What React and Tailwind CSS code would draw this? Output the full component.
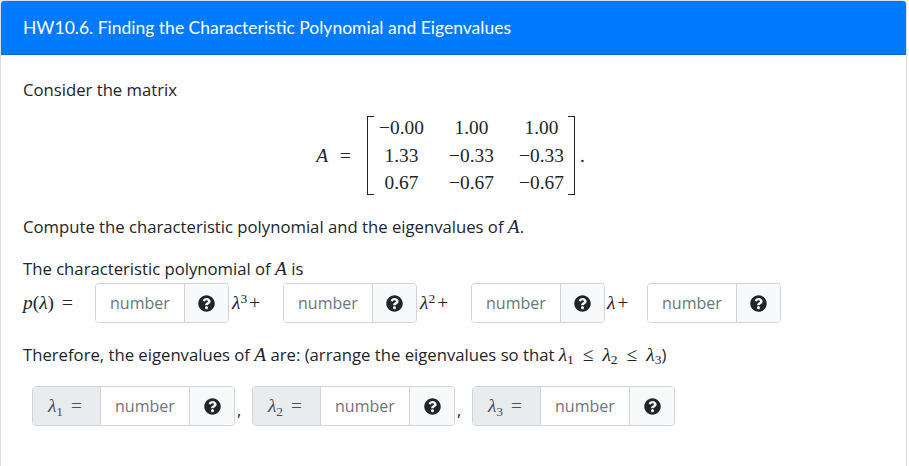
import React from "react";
import { FaQuestionCircle } from "react-icons/fa";

const sans = { fontFamily: '"Open Sans", "Liberation Sans", sans-serif' };

function M({ children, className = "" }) {
  return (
    <span className={`font-['Liberation_Serif',serif] text-[19.36px] leading-none ${className}`}>
      {children}
    </span>
  );
}
function I({ children }) {
  return <span className="italic">{children}</span>;
}
function Eq({ className = "" }) {
  return <span className={`inline-block w-[17px] text-center ${className}`}>=</span>;
}

function Help() {
  return (
    <span className="flex h-full w-[45px] items-center justify-center border-l border-[#ced4da] bg-[#f8f9fa] text-[#212529]">
      <FaQuestionCircle size={17} />
    </span>
  );
}

function NumInput({ w }) {
  return (
    <input
      readOnly
      placeholder="number"
      className={`h-full ${w} bg-white px-[14px] text-[16px] text-[#495057] outline-none placeholder:text-[#6c757d] font-['Open_Sans',sans-serif]`}
    />
  );
}

function PolyGroup() {
  return (
    <span className="flex h-[40px] w-[134px] shrink-0 items-stretch overflow-hidden rounded-[4px] border border-[#ced4da]">
      <NumInput w="w-[88px]" />
      <Help />
    </span>
  );
}

function EigGroup({ n }) {
  return (
    <span className="flex h-[40px] w-[203px] shrink-0 items-stretch overflow-hidden rounded-[4px] border border-[#ced4da]">
      <span className="flex w-[68px] items-center justify-center border-r border-[#ced4da] bg-[#e9ecef] text-[#495057]">
        <M>
          <I>λ</I>
          <sub className="text-[13.5px] not-italic">{n}</sub>
          <Eq className="ml-[5px]" />
        </M>
      </span>
      <NumInput w="w-[88px]" />
      <Help />
    </span>
  );
}

function Bracket({ side }) {
  const base = "w-[7px] self-stretch border-[#212529]";
  return side === "l" ? (
    <span className={`${base} border-l-[1.5px] border-t-[1.5px] border-b-[1.5px]`} />
  ) : (
    <span className={`${base} border-r-[1.5px] border-t-[1.5px] border-b-[1.5px]`} />
  );
}

export default function App() {
  const rows = [
    ["−0.00", "1.00", "1.00"],
    ["1.33", "−0.33", "−0.33"],
    ["0.67", "−0.67", "−0.67"],
  ];
  return (
    <div className="min-h-[466px] bg-white text-[#212529]" style={sans}>
      <div className="w-[907px] h-[470px] rounded-t-[4px] border border-[#dfdfdf] overflow-hidden">
        <div className="flex h-[54px] items-center border-b border-[#0069d9] bg-[#007bff] px-[22px] pt-[2px] font-['Lato',sans-serif] text-[17.5px] text-white">
          HW10.6. Finding the Characteristic Polynomial and Eigenvalues
        </div>
        <div className="px-[22px] pt-[23px] text-[16.7px] leading-[24px]">
          <p>Consider the matrix</p>

          <div className="mt-[14px] flex h-[79px] items-center justify-center pr-[6px]">
            <M className="mr-[13px]">
              <I>A</I>
              <Eq className="ml-[9px]" />
            </M>
            <span className="flex h-[79px] items-stretch">
              <Bracket side="l" />
              <span className="grid grid-cols-[51px_51px_51px] content-center gap-x-[19px] gap-y-[8px] pl-[2px] pr-[1px]">
                {rows.flat().map((v, i) => (
                  <M key={i} className="text-center">
                    {v}
                  </M>
                ))}
              </span>
              <Bracket side="r" />
            </span>
            <M className="ml-[5px] self-center">.</M>
          </div>

          <p className="mt-[20px]">
            Compute the characteristic polynomial and the eigenvalues of <M><I>A</I></M>.
          </p>

          <p className="mt-[18px]">
            The characteristic polynomial of <M><I>A</I></M> is
          </p>

          <div className="mt-[2px] flex h-[40px] items-center">
            <M className="w-[72px] shrink-0">
              <I>p</I>(<I>λ</I>)<Eq className="ml-[5px]" />
            </M>
            <PolyGroup />
            <M className="w-[54px] shrink-0 pl-[3px]">
              <I>λ</I>
              <sup className="text-[13.5px]">3</sup>
              <span className="ml-[2px]">+</span>
            </M>
            <PolyGroup />
            <M className="w-[54px] shrink-0 pl-[3px]">
              <I>λ</I>
              <sup className="text-[13.5px]">2</sup>
              <span className="ml-[2px]">+</span>
            </M>
            <PolyGroup />
            <M className="w-[42px] shrink-0 pl-[2px]">
              <I>λ</I>
              <span className="ml-[2px]">+</span>
            </M>
            <PolyGroup />
          </div>

          <p className="mt-[20px]">
            Therefore, the eigenvalues of <M><I>A</I></M> are: (arrange the eigenvalues so that{" "}
            <M>
              <I>λ</I>
              <sub className="text-[13.5px]">1</sub>
              <span className="mx-[9px]">≤</span>
              <I>λ</I>
              <sub className="text-[13.5px]">2</sub>
              <span className="mx-[9px]">≤</span>
              <I>λ</I>
              <sub className="text-[13.5px]">3</sub>
            </M>
            )
          </p>

          <div className="mt-[19px] flex h-[40px] items-center pl-[9px]">
            <EigGroup n="1" />
            <span className="w-[17px] shrink-0 self-end pb-[4px] pl-[2px]">,</span>
            <EigGroup n="2" />
            <span className="w-[17px] shrink-0 self-end pb-[4px] pl-[2px]">,</span>
            <EigGroup n="3" />
          </div>
        </div>
      </div>
    </div>
  );
}
